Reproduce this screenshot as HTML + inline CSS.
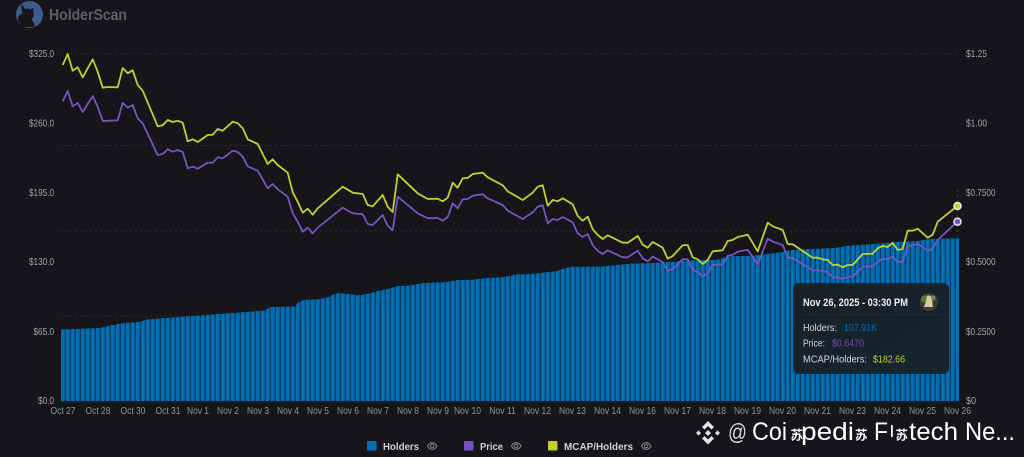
<!DOCTYPE html>
<html lang="en">
<head>
<meta charset="utf-8">
<title>HolderScan</title>
<style>
html,body{margin:0;padding:0;background:#15151a;width:1024px;height:457px;overflow:hidden}
svg{display:block;font-family:"Liberation Sans",sans-serif}
.ax{font-size:10.500px;fill:#a2a5ab}
.xa{font-size:10.500px;fill:#8f949c;text-anchor:middle}
.lg{font-size:10.500px;fill:#cfd1d5;font-weight:700}
.tt{font-size:10.500px;fill:#d6d8dc}
.wm{font-size:25px;fill:#fff}
.cj{font-size:12.500px;fill:#fff;font-weight:700;font-family:"Liberation Sans","Noto Sans CJK SC",sans-serif}
</style>
</head>
<body>
<svg width="1024" height="457" viewBox="0 0 1024 457" xmlns="http://www.w3.org/2000/svg">
<defs>
<pattern id="b" patternUnits="userSpaceOnUse" x="61" y="0" width="5" height="10">
<rect width="5" height="10" fill="#0b3a5a"/>
<rect x="0" width="3.600" height="10" fill="#0070b5"/>
</pattern>
<linearGradient id="tg" x1="0" y1="0" x2="1" y2="1">
<stop offset="0" stop-color="#182028"/><stop offset="1" stop-color="#15252f"/>
</linearGradient>
</defs>
<rect width="1024" height="457" fill="#15151a"/>

<!-- logo -->
<circle cx="29.500" cy="14.500" r="13.500" fill="#3f5b8e"/>
<path d="M21.500 4 L25 9 C27 8.500 28.500 8.500 30 9.500 L33 8 L33.500 13 C34 16 33 18 31.500 19.500 C34 22 35 25 34 27 L23 27 C20 24 18 22 18 19 C18 16 20 14 22.500 13.500 C21.500 10 21 7 21.500 4Z" fill="#15151a"/>
<text x="49" y="20" font-size="15.500" font-weight="700" fill="#5c6168" textLength="78" lengthAdjust="spacingAndGlyphs">HolderScan</text>

<!-- grid -->
<g stroke="#2b2b30" stroke-width="1" stroke-dasharray="2 3">
<path d="M60 53.500H960M60 145.500H960M60 231H960M60 316H960"/>
</g>

<!-- bars -->
<path fill="url(#b)" d="M61 401V329.500L100 328L110 325.500L125 323L140 322L146 319.500L200 315.500L265 310.500L270 307L295 306.500L298 302.700L303 300L318 299.300L328 297.300L333 294.700L338 293L348 294L358 295.300L368 293.700L378 291L388 289L398 286L408 285.700L413 284.700L423 283L443 282.300L453 281L458 280L473 279.700L486 278L503 277.300L513 275.300L518 274.300L528 274.300L538 273.300L557 271L562 269L572 266.700L597 266.700L610 265.700L630 263.700L653 263L673 261.700L693 260.300L717 259.700L725 257.300L730 256.300L753 255.700L767 254L778 252.700L790 250.300L805 249.300L835 248L845 246L870 244.300L897 242L917 241L927 239.300L940 238.700L959 238.300V401Z"/>

<!-- purple line -->
<polyline fill="none" stroke="#7a52c0" stroke-width="1.800" stroke-linejoin="round" points="62.7,101.3 67.7,91 72.7,106.3 77.7,103 82.7,112 92.7,96 97.7,106.7 102.7,121 117.7,120.3 122.7,103 127.7,107.7 132.7,105 137.7,118.3 142.7,123.3 157.7,155 162.7,154 167.7,149.3 172.7,151.7 177.7,150 182.7,152 187.7,168.3 192.7,166.7 197.7,168.7 207.7,162.7 212.7,162.7 217.7,157.3 222.7,158.3 232.7,150.7 237.7,152 242.7,156.7 247.7,166.3 257.7,170.7 267.7,188.3 272.7,184 277.7,189.3 287.7,196.7 292.7,213.3 297.7,221.7 302.7,231.7 307.7,227.7 312.7,233.3 317.7,227.7 342.7,207.7 352.7,213.3 362.7,214.3 367.7,224 372.7,225 382.7,215 387.7,225.7 392.7,230.3 397.7,196.7 417.7,213.3 427.7,218.3 437.7,218 442.7,220.7 447.7,217 452.7,203.3 457.7,208.3 462.7,199.3 467.7,199 472.7,195.7 482.7,194.3 487.7,198.3 502.7,205 507.7,210.7 522.7,219 532.7,212.3 537.7,206.7 542.7,205.3 547.7,223.3 552.7,219 557.7,220 562.7,217 572.7,222.3 577.7,233.3 582.7,237 587.7,234 592.7,245.3 597.7,250.7 602.7,254 607.7,250.3 622.7,257.3 627.7,257.3 637.7,250.7 642.7,258.3 647.7,261.3 652.7,256.7 662.7,262 667.7,271 672.7,269.3 682.7,259.3 687.7,259.3 692.7,270 697.7,272 702.7,276.7 707.7,273 712.7,265 722.7,264.3 727.7,255.7 732.7,254.7 737.7,251.7 747.7,249.7 757.7,264.3 767.7,238.7 772.7,241.7 782.7,245 787.7,257.3 792.7,258 812.7,270.3 817.7,270.3 827.7,272 832.7,277.3 837.7,277.3 842.7,279 847.7,276.7 852.7,276.7 862.7,266.7 872.7,266.3 877.7,261.7 882.7,258.7 887.7,259.3 892.7,256.7 897.7,262 902.7,261.7 907.7,245.7 912.7,245.3 917.7,243.7 927.7,250.7 932.7,248.7 937.7,240 957.3,221.7"/>

<!-- yellow line -->
<polyline fill="none" stroke="#c3d02a" stroke-width="1.800" stroke-linejoin="round" points="62.7,65 67.7,54 72.7,70.7 77.7,67.3 82.7,77.3 92.7,59.3 97.7,71.7 102.7,87.7 107.7,87 117.7,87.3 122.7,68 127.7,73.3 132.7,70.3 137.7,85 142.7,90.7 157.7,126.3 162.7,125.3 167.7,120 172.7,122 177.7,120.7 182.7,122.7 187.7,141.3 192.7,139.3 197.7,142 207.7,135 212.7,134.7 217.7,129 222.7,130.7 232.7,121.7 237.7,123.3 242.7,128.3 247.7,139.3 257.7,144 267.7,164 272.7,159.3 277.7,165 287.7,172.7 292.7,192.3 297.7,201.7 302.7,212.7 307.7,208.7 312.7,214.7 317.7,208.3 342.7,186.7 352.7,192.7 362.7,194 367.7,205 372.7,206.3 382.7,195 387.7,206.7 392.7,212 397.7,174.3 417.7,193.3 427.7,199 437.7,198.7 442.7,201.3 447.7,197.7 452.7,182.7 457.7,187.7 462.7,178.3 467.7,178 472.7,174 482.7,172.7 487.7,177.3 502.7,185.3 507.7,191.3 522.7,200 532.7,192.7 537.7,186.7 542.7,185.3 547.7,205.7 552.7,200 557.7,201.3 562.7,198.3 572.7,204.3 577.7,216 582.7,220.7 587.7,216.7 592.7,229.3 597.7,235 602.7,239 607.7,235.3 622.7,242.7 627.7,242.7 637.7,236 642.7,244.7 647.7,247.7 652.7,242 662.7,247.7 667.7,258.7 672.7,256 682.7,245.3 687.7,245 692.7,257.3 697.7,259.3 702.7,264 707.7,260 712.7,251.3 722.7,250.3 727.7,241 732.7,240 737.7,237 747.7,234.7 757.7,251.3 767.7,222.7 772.7,226.3 782.7,230 787.7,244 792.7,244.3 812.7,257.7 817.7,257.7 822.7,259.3 827.7,260 832.7,265 837.7,264.7 842.7,267.3 847.7,265 852.7,265 862.7,254 872.7,253.7 877.7,248.3 882.7,246 887.7,247 892.7,242.7 897.7,250 902.7,248.7 907.7,230.7 912.7,230.7 917.7,228.7 927.7,237.7 932.7,234.7 937.7,221.7 957.3,206"/>

<!-- crosshair -->
<path d="M957.500 190V240" stroke="#3a3a40" stroke-dasharray="2 3"/>
<circle cx="957.500" cy="206" r="3.500" fill="#c3d02a" stroke="#eef0e0" stroke-width="1.500"/>
<circle cx="957.500" cy="221.700" r="3.500" fill="#7a52c0" stroke="#e6e6f0" stroke-width="1.500"/>

<!-- left axis -->
<g class="ax" text-anchor="end">
<text x="54" y="57" textLength="25" lengthAdjust="spacingAndGlyphs">$325.0</text>
<text x="54" y="126.500" textLength="25" lengthAdjust="spacingAndGlyphs">$260.0</text>
<text x="54" y="196" textLength="25" lengthAdjust="spacingAndGlyphs">$195.0</text>
<text x="54" y="265" textLength="25" lengthAdjust="spacingAndGlyphs">$130.0</text>
<text x="54" y="335" textLength="20.500" lengthAdjust="spacingAndGlyphs">$65.0</text>
<text x="54" y="404" textLength="16" lengthAdjust="spacingAndGlyphs">$0.0</text>
</g>
<!-- right axis -->
<g class="ax">
<text x="966" y="57" textLength="21" lengthAdjust="spacingAndGlyphs">$1.25</text>
<text x="966" y="126.500" textLength="21" lengthAdjust="spacingAndGlyphs">$1.00</text>
<text x="966" y="196" textLength="29.500" lengthAdjust="spacingAndGlyphs">$0.7500</text>
<text x="966" y="265" textLength="29.500" lengthAdjust="spacingAndGlyphs">$0.5000</text>
<text x="966" y="335" textLength="29.500" lengthAdjust="spacingAndGlyphs">$0.2500</text>
<text x="966" y="404" textLength="10" lengthAdjust="spacingAndGlyphs">$0</text>
</g>
<!-- x axis -->
<g class="xa">
<text x="63" y="414" textLength="25" lengthAdjust="spacingAndGlyphs">Oct 27</text>
<text x="98" y="414" textLength="25" lengthAdjust="spacingAndGlyphs">Oct 28</text>
<text x="133" y="414" textLength="25" lengthAdjust="spacingAndGlyphs">Oct 30</text>
<text x="168" y="414" textLength="25" lengthAdjust="spacingAndGlyphs">Oct 31</text>
<text x="198" y="414" textLength="22" lengthAdjust="spacingAndGlyphs">Nov 1</text>
<text x="228" y="414" textLength="22" lengthAdjust="spacingAndGlyphs">Nov 2</text>
<text x="258" y="414" textLength="22" lengthAdjust="spacingAndGlyphs">Nov 3</text>
<text x="288" y="414" textLength="22" lengthAdjust="spacingAndGlyphs">Nov 4</text>
<text x="318" y="414" textLength="22" lengthAdjust="spacingAndGlyphs">Nov 5</text>
<text x="348" y="414" textLength="22" lengthAdjust="spacingAndGlyphs">Nov 6</text>
<text x="378" y="414" textLength="22" lengthAdjust="spacingAndGlyphs">Nov 7</text>
<text x="408" y="414" textLength="22" lengthAdjust="spacingAndGlyphs">Nov 8</text>
<text x="438" y="414" textLength="22" lengthAdjust="spacingAndGlyphs">Nov 9</text>
<text x="467.500" y="414" textLength="27" lengthAdjust="spacingAndGlyphs">Nov 10</text>
<text x="502.500" y="414" textLength="26.500" lengthAdjust="spacingAndGlyphs">Nov 11</text>
<text x="537.500" y="414" textLength="27" lengthAdjust="spacingAndGlyphs">Nov 12</text>
<text x="572.500" y="414" textLength="27" lengthAdjust="spacingAndGlyphs">Nov 13</text>
<text x="607.500" y="414" textLength="27" lengthAdjust="spacingAndGlyphs">Nov 14</text>
<text x="642.500" y="414" textLength="27" lengthAdjust="spacingAndGlyphs">Nov 16</text>
<text x="677.500" y="414" textLength="27" lengthAdjust="spacingAndGlyphs">Nov 17</text>
<text x="712.500" y="414" textLength="27" lengthAdjust="spacingAndGlyphs">Nov 18</text>
<text x="747.500" y="414" textLength="27" lengthAdjust="spacingAndGlyphs">Nov 19</text>
<text x="782.500" y="414" textLength="27" lengthAdjust="spacingAndGlyphs">Nov 20</text>
<text x="817.500" y="414" textLength="27" lengthAdjust="spacingAndGlyphs">Nov 21</text>
<text x="852.500" y="414" textLength="27" lengthAdjust="spacingAndGlyphs">Nov 23</text>
<text x="887.500" y="414" textLength="27" lengthAdjust="spacingAndGlyphs">Nov 24</text>
<text x="922.500" y="414" textLength="27" lengthAdjust="spacingAndGlyphs">Nov 25</text>
<text x="957.500" y="414" textLength="27" lengthAdjust="spacingAndGlyphs">Nov 26</text>
</g>

<!-- tooltip -->
<rect x="793" y="283" width="156" height="91" rx="6" fill="url(#tg)"/>
<text x="803" y="306" font-size="11" font-weight="700" fill="#eceef0" textLength="105" lengthAdjust="spacingAndGlyphs">Nov 26, 2025 - 03:30 PM</text>
<circle cx="929" cy="302" r="9" fill="#3a3f2c"/>
<circle cx="924.500" cy="299" r="3.500" fill="#5b7a3a"/>
<circle cx="933" cy="298" r="2.500" fill="#6f8a48"/>
<path d="M927 295.500h3.500l1.500 5 1 6.500h-9l1.500-4z" fill="#d8c8a8"/>
<path d="M803 314.500H948" stroke="#2a343c" stroke-dasharray="1 1"/>
<text class="tt" x="803" y="331" textLength="34" lengthAdjust="spacingAndGlyphs">Holders:</text>
<text x="844" y="331" font-size="10.500" fill="#0b6aa8" textLength="33" lengthAdjust="spacingAndGlyphs">107.91K</text>
<text class="tt" x="803" y="346.500" textLength="22" lengthAdjust="spacingAndGlyphs">Price:</text>
<text x="832" y="346.500" font-size="10.500" fill="#6f4fb0" textLength="32" lengthAdjust="spacingAndGlyphs">$0.6470</text>
<text class="tt" x="803" y="362.500" textLength="64" lengthAdjust="spacingAndGlyphs">MCAP/Holders:</text>
<text x="873" y="362.500" font-size="10.500" fill="#c3d02a" textLength="32" lengthAdjust="spacingAndGlyphs">$182.66</text>

<!-- legend -->
<rect x="367" y="441" width="9.500" height="9.500" rx="1" fill="#0070b5"/>
<text class="lg" x="383" y="450" textLength="36" lengthAdjust="spacingAndGlyphs">Holders</text>
<g fill="none" stroke="#85888e" stroke-width="1">
<path d="M427.500 446C430 441.500 434.500 441.500 437 446C434.500 450.500 430 450.500 427.500 446Z"/><circle cx="432.200" cy="446" r="1.800"/>
<path d="M511.500 446C514 441.500 518.500 441.500 521 446C518.500 450.500 514 450.500 511.500 446Z"/><circle cx="516.200" cy="446" r="1.800"/>
<path d="M641.500 446C644 441.500 648.500 441.500 651 446C648.500 450.500 644 450.500 641.500 446Z"/><circle cx="646.200" cy="446" r="1.800"/>
</g>
<rect x="464" y="441" width="9.500" height="9.500" rx="1" fill="#7a52c0"/>
<text class="lg" x="480" y="450" textLength="23" lengthAdjust="spacingAndGlyphs">Price</text>
<rect x="548" y="441" width="9.500" height="9.500" rx="1" fill="#c3d02a"/>
<text class="lg" x="564" y="450" textLength="69" lengthAdjust="spacingAndGlyphs">MCAP/Holders</text>

<!-- watermark -->
<g fill="#e4e4e4">
<path d="M708 421L714 427L711.500 429.500L708 426L704.500 429.500L702 427Z"/>
<path d="M708 444.500L714 438.500L711.500 436L708 439.500L704.500 436L702 438.500Z"/>
<path d="M708 430L711 433L708 436L705 433Z"/>
<path d="M698.500 430.500L701 433L698.500 435.500L696 433Z"/>
<path d="M717.500 430.500L720 433L717.500 435.500L715 433Z"/>
</g>
<text x="728" y="440" font-size="23" fill="#d8d8d8" textLength="19" lengthAdjust="spacingAndGlyphs">@</text>
<text class="wm" x="752" y="440" textLength="35" lengthAdjust="spacingAndGlyphs">Coi</text>
<text class="cj" x="790.500" y="439.500">苏</text>
<text class="wm" x="801" y="440" textLength="53" lengthAdjust="spacingAndGlyphs">pedi</text>
<text class="cj" x="855" y="439.500">苏</text>
<text class="wm" x="874" y="440" textLength="14" lengthAdjust="spacingAndGlyphs">F</text>
<rect x="891" y="425" width="1.800" height="12" fill="#fff"/>
<text class="cj" x="895.500" y="439.500">苏</text>
<text class="wm" x="909" y="440" textLength="49" lengthAdjust="spacingAndGlyphs">tech</text>
<text class="wm" x="965" y="440" textLength="50" lengthAdjust="spacingAndGlyphs">Ne...</text>
</svg>
</body>
</html>
